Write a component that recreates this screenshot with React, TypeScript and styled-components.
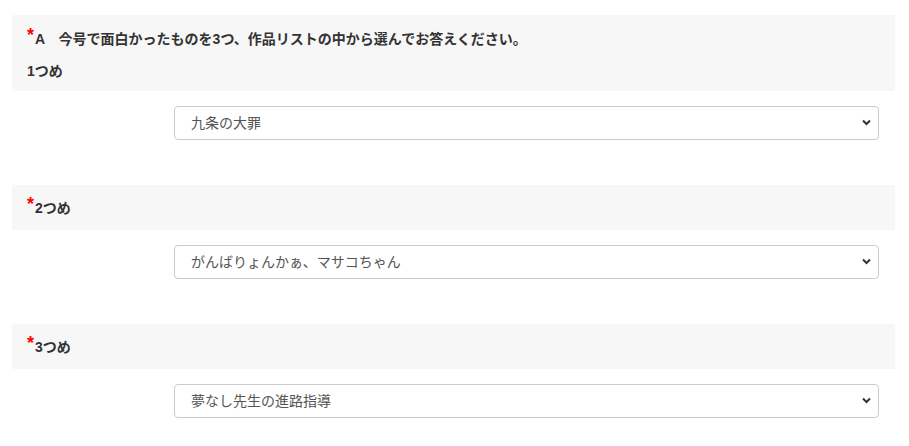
import React from "react"
import styled, { createGlobalStyle } from "styled-components"

const GlobalStyle = createGlobalStyle`
  html, body {
    margin: 0;
    padding: 0;
    background: #fff;
  }
  body {
    font-family: "Liberation Sans", Arial, "Noto Sans CJK JP", sans-serif;
    color: #333;
  }
`

const Page = styled.div`
  padding: 15px 14px 0 12px;
`

const Question = styled.section``

const Heading = styled.div<{ tall?: boolean }>`
  background: #f7f7f7;
  height: ${(p) => (p.tall ? "76px" : "45px")};
  box-sizing: border-box;
  padding: ${(p) => (p.tall ? "14px 0 0 15px" : "13px 0 0 15px")};
  font-size: 14px;
  font-weight: bold;
  line-height: 19px;
`

const Line = styled.div`
  display: flex;
  align-items: baseline;
  & + & {
    margin-top: 13px;
  }
`

const Required = styled.span`
  color: #ff0000;
  font-size: 18px;
  font-weight: bold;
  position: relative;
  top: -3px;
  margin-right: 1px;
`

const Field = styled.div`
  padding: 15px 16px 45px 162px;
`

const SelectWrap = styled.div`
  position: relative;
`

const Select = styled.select`
  appearance: none;
  width: 100%;
  height: 34px;
  box-sizing: border-box;
  border: 1px solid #ccc;
  border-radius: 4px;
  background: #fff;
  padding: 0 30px 0 16px;
  font-family: "Liberation Sans", Arial, "Noto Sans CJK JP", sans-serif;
  font-size: 14px;
  color: #555;
  outline: none;
`

const Chevron = styled.svg`
  position: absolute;
  right: 8px;
  top: 13px;
  width: 9px;
  height: 7px;
  pointer-events: none;
`

const Arrow = () => (
  <Chevron viewBox="0 0 9 7">
    <path d="M1 1.5 L4.5 5 L8 1.5" fill="none" stroke="#333" strokeWidth="2" />
  </Chevron>
)

const Dropdown = ({ value }: { value: string }) => (
  <Field>
    <SelectWrap>
      <Select defaultValue={value}>
        <option>{value}</option>
      </Select>
      <Arrow />
    </SelectWrap>
  </Field>
)

const App: React.FC = () => {
  return (
    <Page>
      <GlobalStyle />
      <Question>
        <Heading tall>
          <Line>
            <Required>*</Required>
            <span>A　今号で面白かったものを3つ、作品リストの中から選んでお答えください。</span>
          </Line>
          <Line>1つめ</Line>
        </Heading>
        <Dropdown value="九条の大罪" />
      </Question>
      <Question>
        <Heading>
          <Line>
            <Required>*</Required>
            <span>2つめ</span>
          </Line>
        </Heading>
        <Dropdown value="がんばりょんかぁ、マサコちゃん" />
      </Question>
      <Question>
        <Heading>
          <Line>
            <Required>*</Required>
            <span>3つめ</span>
          </Line>
        </Heading>
        <Dropdown value="夢なし先生の進路指導" />
      </Question>
    </Page>
  )
}

export default App
